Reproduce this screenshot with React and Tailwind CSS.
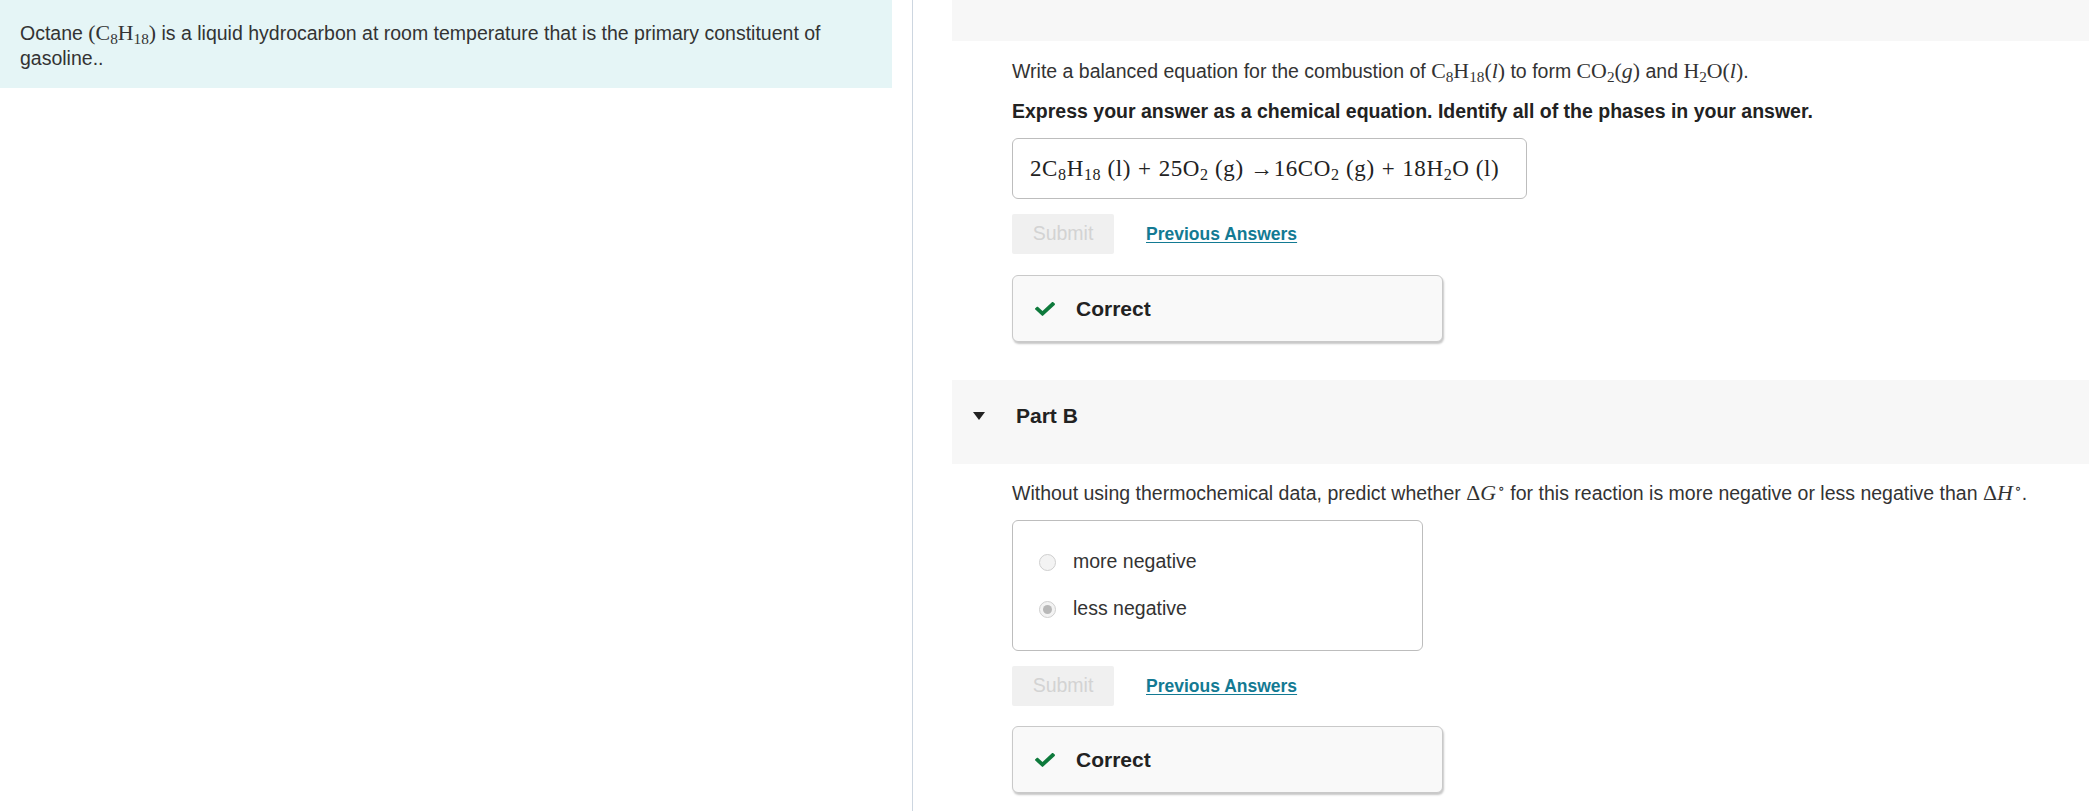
import React from "react";

const Sub = ({ children }) => (
  <sub className="relative bottom-[-0.25em] align-baseline text-[0.7em] leading-[0]">{children}</sub>
);

// inline math, set in a serif face like the KaTeX output
const M = ({ children, className = "" }) => (
  <span className={`font-['Liberation_Serif','DejaVu_Serif',serif] text-[1.12em] leading-[0] ${className}`}>
    {children}
  </span>
);

function Check() {
  return (
    <svg width="20" height="14" viewBox="0 66 512 384" preserveAspectRatio="none" className="shrink-0">
      <path
        fill="#0e7a3c"
        d="M173.9 439.4l-166.4-166.4c-10-10-10-26.2 0-36.2l36.2-36.2c10-10 26.2-10 36.2 0L192 312.7 432.1 72.6c10-10 26.2-10 36.2 0l36.2 36.2c10 10 10 26.2 0 36.2l-294.4 294.4c-10 10-26.2 10-36.2 0z"
      />
    </svg>
  );
}

function SubmitRow({ className = "" }) {
  return (
    <div className={`flex items-center gap-[32px] ${className}`}>
      <button
        disabled
        className="h-[40px] w-[102px] rounded-[2px] bg-[#f0f0f0] text-[19.5px] text-[#d3d3d3]"
      >
        Submit
      </button>
      <a href="#" className="text-[17.5px] font-bold text-[#137a93] underline underline-offset-2">
        Previous Answers
      </a>
    </div>
  );
}

function Correct({ className = "" }) {
  return (
    <div
      className={`flex h-[67px] w-[431px] items-center gap-[21px] rounded-[6px] border border-[#c9c9c9] bg-[#f9f9f9] pl-[22px] shadow-[1px_2px_2px_rgba(0,0,0,0.22)] ${className}`}
    >
      <Check />
      <span className="text-[21px] font-bold text-[#222]">Correct</span>
    </div>
  );
}

function Radio({ checked, label }) {
  return (
    <label className="flex h-[47px] items-center gap-[17px]">
      <span className="flex h-[17px] w-[17px] items-center justify-center rounded-full border border-[#cfcfcf] bg-[#f3f3f3]">
        {checked && <span className="h-[9px] w-[9px] rounded-full bg-[#b8b8b8]" />}
      </span>
      <span className="text-[19.5px] text-[#333]">{label}</span>
    </label>
  );
}

export default function App() {
  return (
    <div className="flex h-[811px] w-full overflow-hidden bg-white font-['Liberation_Sans',Arial,sans-serif] text-[#333]">
      <div className="w-[912px] shrink-0">
        <div className="w-[892px] bg-[#e5f5f6] pb-[17px] pl-[20px] pr-[40px] pt-[21px] text-[19.5px] leading-[25px]">
          Octane{" "}
          <M>
            (C<Sub>8</Sub>H<Sub>18</Sub>)
          </M>{" "}
          is a liquid hydrocarbon at room temperature that is the primary constituent of gasoline..
        </div>
      </div>

      <div className="w-px shrink-0 bg-[#cdd6e0]" />

      <div className="flex-1 pl-[39px]">
        <div className="h-[41px] bg-[#f7f7f7]" />

        <div className="pl-[60px]">
          <p className="mt-[17px] text-[19.5px] leading-[26px]">
            Write a balanced equation for the combustion of{" "}
            <M>
              C<Sub>8</Sub>H<Sub>18</Sub>(<i>l</i>)
            </M>{" "}
            to form{" "}
            <M>
              CO<Sub>2</Sub>(<i>g</i>)
            </M>{" "}
            and{" "}
            <M>
              H<Sub>2</Sub>O(<i>l</i>)
            </M>
            .
          </p>
          <p className="mt-[14px] text-[19.5px] font-bold leading-[26px] text-[#222]">
            Express your answer as a chemical equation. Identify all of the phases in your answer.
          </p>

          <div className="mt-[14px] flex h-[61px] w-[515px] items-center rounded-[6px] border border-[#bdbdbd] pl-[17px] text-[#222]">
            <span className="font-['Liberation_Serif','DejaVu_Serif',serif] text-[23px] leading-none tracking-[0.6px]">
              2C<Sub>8</Sub>H<Sub>18</Sub> (l)<span className="mx-[7px]">+</span>25O<Sub>2</Sub> (g) →16CO<Sub>2</Sub> (g)
              <span className="mx-[7px]">+</span>18H<Sub>2</Sub>O (l)
            </span>
          </div>

          <SubmitRow className="mt-[15px]" />
          <Correct className="mt-[21px]" />
        </div>

        <div className="mt-[38px] flex h-[84px] items-center gap-[31px] bg-[#f7f7f7] pb-[12px] pl-[21px]">
          <svg width="12" height="8" viewBox="0 0 12 8">
            <path d="M0 0h12L6 8z" fill="#222" />
          </svg>
          <span className="text-[21px] font-bold text-[#222]">Part B</span>
        </div>

        <div className="pl-[60px]">
          <p className="mt-[16px] text-[19.5px] leading-[26px]">
            Without using thermochemical data, predict whether{" "}
            <M>
              Δ<i>G</i>
              <sup className="ml-[2px] text-[0.65em]">∘</sup>
            </M>{" "}
            for this reaction is more negative or less negative than{" "}
            <M>
              Δ<i>H</i>
              <sup className="ml-[2px] text-[0.65em]">∘</sup>
            </M>
            .
          </p>

          <div className="mt-[14px] flex h-[131px] w-[411px] flex-col justify-center rounded-[6px] border border-[#bdbdbd] pl-[26px]">
            <Radio label="more negative" />
            <Radio checked label="less negative" />
          </div>

          <SubmitRow className="mt-[15px]" />
          <Correct className="mt-[20px]" />
        </div>
      </div>
    </div>
  );
}
